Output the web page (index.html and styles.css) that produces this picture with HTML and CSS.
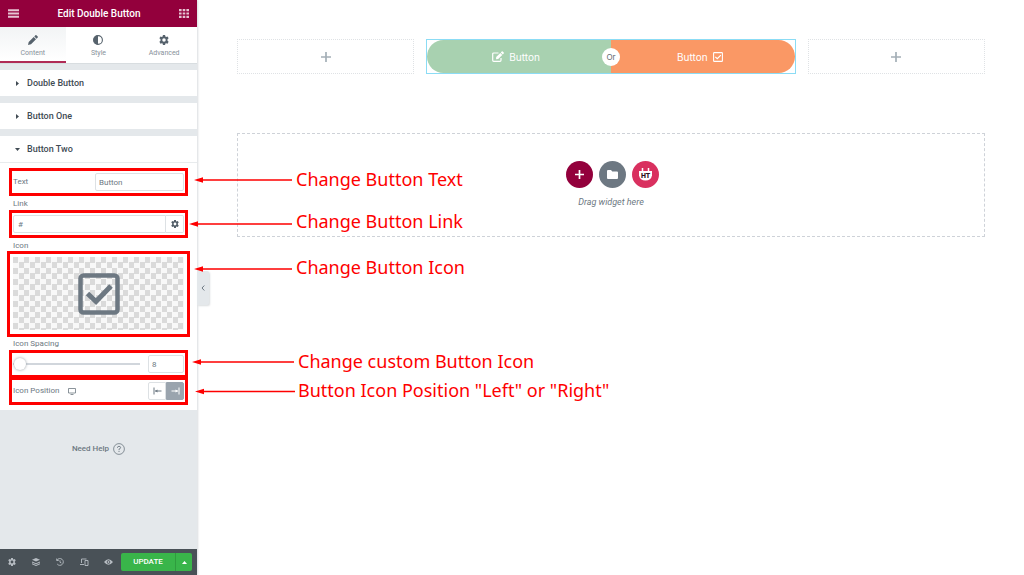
FILE: index.html
```html
<!DOCTYPE html>
<html lang="en">
<head>
<meta charset="utf-8">
<title>Edit Double Button</title>
<link rel="stylesheet" href="styles.css">
</head>
<body>
<svg class="defs" aria-hidden="true">
  <symbol id="gear" viewBox="0 0 16 16"><path fill-rule="evenodd" d="M6.3 0h3.4l.5 2.3 1.2.7 2.3-.8 1.7 3-1.8 1.6v2.4l1.8 1.6-1.7 3-2.3-.8-1.2.7-.5 2.3H6.3l-.5-2.3-1.2-.7-2.3.8-1.7-3 1.8-1.6V6.800L.6 5.200l1.700-3 2.300.8 1.200-.7zM8 5.200a2.800 2.800 0 1 0 0 5.600 2.800 2.800 0 0 0 0-5.600z"/></symbol>
  <symbol id="check-square" viewBox="0 0 42 42"><rect x="2.500" y="2.500" width="37" height="37" rx="3" fill="none" stroke="currentColor" stroke-width="4.500"/><path d="M9.500 20.500 18 28.500 33 13" fill="none" stroke="currentColor" stroke-width="5"/></symbol>
</svg>
<div class="editor">
  <aside class="panel">
    <header class="panel-header">
      <button class="plain" aria-label="Menu"><svg width="11" height="9" viewBox="0 0 11 9"><path d="M0 1.200h11M0 4.500h11M0 7.800h11" stroke="currentColor" stroke-width="2"/></svg></button>
      <h1 class="panel-title">Edit Double Button</h1>
      <button class="plain" aria-label="Widgets"><svg width="10" height="9" viewBox="0 0 10 9"><path d="M0 1.200h10M0 4.500h10M0 7.800h10" stroke="currentColor" stroke-width="2.200" stroke-dasharray="2.600 1.100"/></svg></button>
    </header>
    <nav class="tabs">
      <button class="tab tab-active"><svg width="10" height="10" viewBox="0 0 10 10"><path d="M0 10 .7 7 5.700 2 8 4.300 3 9.300zM6.300 1.400 7.400.3q.5-.5 1 0l1.300 1.300q.5.5 0 1L8.600 3.700z"/></svg>Content</button>
      <button class="tab"><svg width="10" height="10" viewBox="0 0 10 10"><circle cx="5" cy="5" r="4.400" fill="none" stroke="currentColor" stroke-width="1.100"/><path d="M5 .5a4.500 4.500 0 0 0 0 9z"/></svg>Style</button>
      <button class="tab"><svg width="10" height="10"><use href="#gear"/></svg>Advanced</button>
    </nav>
    <button class="section-title"><svg width="5" height="5" viewBox="0 0 5 5"><path d="M1 0 4 2.500 1 5z"/></svg>Double Button</button>
    <button class="section-title"><svg width="5" height="5" viewBox="0 0 5 5"><path d="M1 0 4 2.500 1 5z"/></svg>Button One</button>
    <section class="section">
      <button class="section-title section-open"><svg width="5" height="5" viewBox="0 0 5 5"><path d="M0 1h5L2.500 4z"/></svg>Button Two</button>
      <div class="controls">
        <div class="control marked mark-text">
          <label for="text">Text</label>
          <input class="field field-text" id="text" type="text" value="Button">
        </div>
        <label class="caption" for="link">Link</label>
        <div class="control marked mark-link">
          <input class="field field-link" id="link" type="text" value="#">
          <button class="link-options" aria-label="Link options"><svg width="8" height="8"><use href="#gear"/></svg></button>
        </div>
        <div class="caption">Icon</div>
        <div class="marked mark-icon">
          <button class="icon-preview" aria-label="Choose icon"><svg width="42" height="42"><use href="#check-square"/></svg></button>
        </div>
        <label class="caption caption-spacing" for="spacing">Icon Spacing</label>
        <div class="control marked mark-spacing">
          <input class="slider" type="range" min="0" max="100" value="1" aria-label="Icon spacing">
          <input class="field field-number" id="spacing" type="text" value="8">
        </div>
        <div class="control marked mark-position">
          <span class="position-label">Icon Position
            <svg width="8" height="7" viewBox="0 0 8 7"><path d="M.5.500h7v4.500h-7zM2.500 6.500h3" fill="none" stroke="currentColor" stroke-width=".8"/></svg></span>
          <span class="choices">
            <button class="choice" aria-label="Left"><svg width="9" height="8" viewBox="0 0 9 8"><path d="M1 .5v7M2 4h6.500" fill="none" stroke="currentColor"/><path d="M2 4 4.500 2.400v3.200z"/></svg></button>
            <button class="choice choice-on" aria-label="Right"><svg width="9" height="8" viewBox="0 0 9 8"><path d="M8 .5v7M.5 4H7" fill="none" stroke="currentColor"/><path d="M7 4 4.500 2.400v3.200z"/></svg></button>
          </span>
        </div>
      </div>
    </section>
    <a class="help" href="#help">Need Help <svg width="12" height="12" viewBox="0 0 12 12"><circle cx="6" cy="6" r="5.400" fill="none" stroke="currentColor" stroke-width=".8"/><path d="M4.400 4.800Q4.500 3.300 6 3.300q1.600 0 1.600 1.400Q7.600 5.600 6 6.200v1M6 8v1" fill="none" stroke="currentColor" stroke-width=".9"/></svg></a>
    <footer class="panel-footer">
      <div class="tools">
        <button class="plain" aria-label="Settings"><svg width="8" height="8"><use href="#gear"/></svg></button>
        <button class="plain" aria-label="Navigator"><svg width="8" height="8" viewBox="0 0 8 8"><path d="M4 0 8 1.800 4 3.600 0 1.800zM0 3.500 4 5.300 8 3.500v.9L4 6.200 0 4.400zM0 5.300l4 1.800 4-1.800v.9L4 8 0 6.200z"/></svg></button>
        <button class="plain" aria-label="History"><svg width="8" height="8" viewBox="0 0 8 8"><path d="M1 2.200A3.400 3.400 0 1 1 1.200 6M.7.500v2h2M4 2.300V4.300L5.400 5" fill="none" stroke="currentColor" stroke-width=".9"/></svg></button>
        <button class="plain" aria-label="Responsive mode"><svg width="9" height="8" viewBox="0 0 9 8"><path d="M1.500 5V1h5M0 6.500h4M5 2.500h3v5H5z" fill="none" stroke="currentColor" stroke-width=".9"/></svg></button>
        <button class="plain" aria-label="Preview"><svg width="9" height="8" viewBox="0 0 9 8"><path fill-rule="evenodd" d="M0 4Q4.500-1.500 9 4 4.500 9.500 0 4zM4.500 2.200a1.800 1.800 0 1 0 0 3.600 1.800 1.800 0 0 0 0-3.600z"/><circle cx="4.500" cy="4" r="1"/></svg></button>
      </div>
      <button class="update">UPDATE</button>
      <button class="update-more" aria-label="Save options"><svg width="5" height="3" viewBox="0 0 5 3"><path d="M0 3h5L2.500 0z"/></svg></button>
    </footer>
    <button class="collapse" aria-label="Hide panel"><svg width="4" height="6" viewBox="0 0 4 6"><path d="M3.300.5 1 3l2.300 2.500" fill="none" stroke="currentColor"/></svg></button>
  </aside>
  <main class="canvas">
    <div class="columns">
      <button class="empty-column" aria-label="Add widget"><svg width="10" height="10" viewBox="0 0 10 10"><path d="M5 0v10M0 5h10" stroke="currentColor" stroke-width="1.700"/></svg></button>
      <div class="double-button">
        <a class="half half-one" href="#one"><svg width="12" height="11" viewBox="0 0 12 11"><path d="M6.500 2H1.700q-1 0-1 1v6.300q0 1 1 1H8q1 0 1-1V7" fill="none" stroke="currentColor" stroke-width="1.200"/><path d="M4 8.200 4.200 6 8.300 1.900l2 2-4.100 4.100zM8.800 1.400 9.700.5q.5-.5 1 0l1 1q.5.5 0 1l-.9.900z"/></svg>Button</a>
        <a class="half half-two" href="#two">Button<svg width="10" height="10"><use href="#check-square"/></svg></a>
        <span class="or">Or</span>
      </div>
      <button class="empty-column" aria-label="Add widget"><svg width="10" height="10" viewBox="0 0 10 10"><path d="M5 0v10M0 5h10" stroke="currentColor" stroke-width="1.700"/></svg></button>
    </div>
    <div class="drop-area">
      <div class="add-buttons">
        <button class="round round-add" aria-label="Add section"><svg width="9" height="9" viewBox="0 0 9 9"><path d="M4.500 0v9M0 4.500h9" stroke="currentColor" stroke-width="1.700"/></svg></button>
        <button class="round round-folder" aria-label="Add template"><svg width="11" height="9" viewBox="0 0 11 9"><path d="M0 1q0-1 1-1h3l1.300 1.400H10q1 0 1 1V8q0 1-1 1H1Q0 9 0 8z"/></svg></button>
        <button class="round round-ht" aria-label="HT templates"><svg width="15" height="14" viewBox="0 0 15 14"><path d="M1 3h13v4.500Q13 12.500 7.500 12.500T1 7.500z"/><path d="M4.500 0v4M10.500 0v4" stroke="currentColor" stroke-width="1.500"/><text class="ht" x="7.500" y="10" text-anchor="middle">HT</text></svg></button>
      </div>
      <p class="drop-text">Drag widget here</p>
    </div>
  </main>
  <div class="notes">
    <svg class="arrows" width="300" height="400" viewBox="0 0 300 400" aria-hidden="true">
      <path d="M200 180h92M195 224h97M200 269h92M197 362h97M200 391.500h95" stroke="currentColor" stroke-width="1.700"/>
      <path d="m194 180 9-2.800v5.600zM189 224l9-2.800v5.600zM194 269l9-2.800v5.600zM192 362l9-2.800v5.600zM195 391.500l9-2.800v5.600z"/>
    </svg>
    <span class="note note-text">Change Button Text</span>
    <span class="note note-link">Change Button Link</span>
    <span class="note note-icon">Change Button Icon</span>
    <span class="note note-custom">Change custom Button Icon</span>
    <span class="note note-position">Button Icon Position "Left" or "Right"</span>
  </div>
</div>
</body>
</html>
```
FILE: styles.css
```css
* { box-sizing: border-box; }
body { margin: 0; background: #fff; color: #6d7882; font-family: Roboto, sans-serif; font-size: 8px; line-height: 12px; }
button, input { margin: 0; padding: 0; border: 0; background: none; color: inherit; font: inherit; }
a { color: inherit; text-decoration: none; }
svg { fill: currentColor; flex: none; }
.defs { position: absolute; width: 0; height: 0; }

.editor { position: relative; display: flex; min-height: 100vh; }
.panel { position: relative; display: flex; flex-direction: column; flex: none; width: 197px; background: #e4e8eb; box-shadow: 1px 0 2px #d9dcdf; }
.plain { display: flex; align-items: center; justify-content: center; }
.panel-header { display: flex; align-items: center; justify-content: space-between; height: 27px; padding: 0 8px; background: #93003c; color: #e6c4d2; }
.panel-title { margin: 0; color: #fff; font-size: 10px; font-weight: 500; }
.tabs { display: grid; grid-template-columns: repeat(3, 1fr); height: 37px; margin-bottom: 6px; background: #fff; border-bottom: 1px solid #d8dde0; }
.tab { display: flex; flex-direction: column; align-items: center; gap: 2px; padding-top: 8px; color: #87919a; font-size: 7px; line-height: 12px; }
.tab svg { color: #56626c; }
.tab-active { background: linear-gradient(#f2f4f5, #fff); border-bottom: 2px solid #b02b55; }
.section-title { display: flex; align-items: center; gap: 7px; width: 100%; height: 26px; margin-bottom: 7px; padding-left: 15px; background: #fff; color: #414b54; font-size: 9px; font-weight: 500; text-align: left; }
.section { background: #fff; }
.section-open { height: 27px; margin: 0; border-bottom: 1px solid #e8ebed; }

.controls { padding: 10px 13px; }
.control { display: flex; align-items: center; justify-content: space-between; height: 18px; }
.caption { display: block; height: 12px; margin: 7px 0 5px; }
.caption-spacing { margin: 8px 0 5px; }
.field { height: 18px; padding: 0 3px; border: 1px solid #dde1e4; border-radius: 2px; background: #fff; }
.field-text { width: 89px; }
.field-link { flex: 1; min-width: 0; padding: 0 4px; border-radius: 2px 0 0 2px; }
.link-options { display: flex; align-items: center; justify-content: center; width: 18px; height: 18px; border: 1px solid #dde1e4; border-left: 0; border-radius: 0 2px 2px 0; color: #4f5b65; }
.icon-preview { display: flex; align-items: center; justify-content: center; width: 100%; height: 73px; background: repeating-conic-gradient(#f8f8f8 0 25%, #dadada 0 50%) 0 0 / 11px 11px; color: #6d7882; }
.field-number { width: 36px; }
.slider { appearance: none; width: 127px; height: 12px; background: linear-gradient(#d1d6dc, #d1d6dc) center / 100% 2px no-repeat; }
.slider::-webkit-slider-thumb { appearance: none; width: 12px; height: 12px; border-radius: 50%; background: #fff; box-shadow: 0 0 3px #9299a0; }
.mark-position { margin-top: 9px; }
.position-label { display: flex; align-items: center; gap: 8px; }
.choices { display: flex; width: 36px; }
.choice { display: flex; align-items: center; justify-content: center; width: 18px; height: 18px; border: 1px solid #dde1e4; border-radius: 2px 0 0 2px; color: #6d7882; }
.choice-on { border-color: #9aa4ae; border-radius: 0 2px 2px 0; background: #9aa4ae; color: #fff; }

.marked { position: relative; }
.marked::after { content: ""; position: absolute; inset: -5px -4px; border: 3px solid #fe0000; pointer-events: none; }
.mark-icon::after { inset: -6px -6px -7px; }

.help { display: flex; align-items: center; justify-content: center; gap: 4px; margin-top: 33px; font-weight: 500; }
.panel-footer { display: flex; align-items: center; height: 26px; margin-top: auto; padding-right: 5px; background: #495157; color: #b8bec4; }
.tools { display: grid; grid-template-columns: repeat(5, 1fr); flex: 1; }
.update, .update-more { height: 18px; background: #39b54a; color: #fff; font-weight: 500; }
.update { width: 54px; border-radius: 2px 0 0 2px; }
.update-more { display: flex; align-items: center; justify-content: center; width: 17px; border-left: 1px solid #2f9c3e; border-radius: 0 2px 2px 0; }
.collapse { position: absolute; top: 271px; left: 100%; display: flex; align-items: center; justify-content: center; width: 12px; height: 34px; border-radius: 0 2px 2px 0; background: #e4e8eb; box-shadow: 1px 1px 2px #dadddf; }

.canvas { flex: 1; min-width: 0; padding: 39px 39px 39px 40px; }
.columns { display: grid; grid-template-columns: 177fr 369fr 177fr; gap: 12px; height: 35px; }
.empty-column { display: flex; align-items: center; justify-content: center; border: 1px dotted #dfe2e5; color: #a4afb7; }
.double-button { position: relative; display: grid; grid-template-columns: 1fr 1fr; border: 1px solid #8bdcf5; color: #fff; font-family: Inter, sans-serif; font-size: 10px; }
.half { display: flex; align-items: center; justify-content: center; gap: 5px; padding-right: 6px; }
.half-one { border-radius: 17px 0 0 17px; background: #a8d1b0; }
.half-two { border-radius: 0 17px 17px 0; background: #fa9865; }
.or { position: absolute; inset: 0; display: grid; place-items: center; width: 18px; height: 18px; margin: auto; border-radius: 50%; background: #fff; color: #626970; font-size: 8px; }
.drop-area { display: flex; flex-direction: column; align-items: center; gap: 8px; height: 104px; margin-top: 59px; padding-top: 27px; border: 1px dashed #ced2d8; }
.add-buttons { display: flex; gap: 6px; padding-left: 3px; }
.round { display: flex; align-items: center; justify-content: center; width: 27px; height: 27px; border-radius: 50%; color: #fff; }
.round-add { background: #93003c; }
.round-folder { background: #6d7882; }
.round-ht { background: #d9305f; }
.ht { fill: #32131e; font-size: 7px; font-weight: 900; }
.drop-text { margin: 0; font-size: 9px; font-style: italic; }

.notes { position: absolute; inset: 0; color: #fe0000; pointer-events: none; }
.arrows { position: absolute; top: 0; left: 0; }
.note { position: absolute; left: 296px; font-family: "Noto Sans", sans-serif; font-size: 18px; line-height: 24px; white-space: nowrap; }
.note-text { top: 167px; }
.note-link { top: 209px; }
.note-icon { top: 255px; }
.note-custom { top: 349px; left: 298px; }
.note-position { top: 378px; left: 298px; }
```
